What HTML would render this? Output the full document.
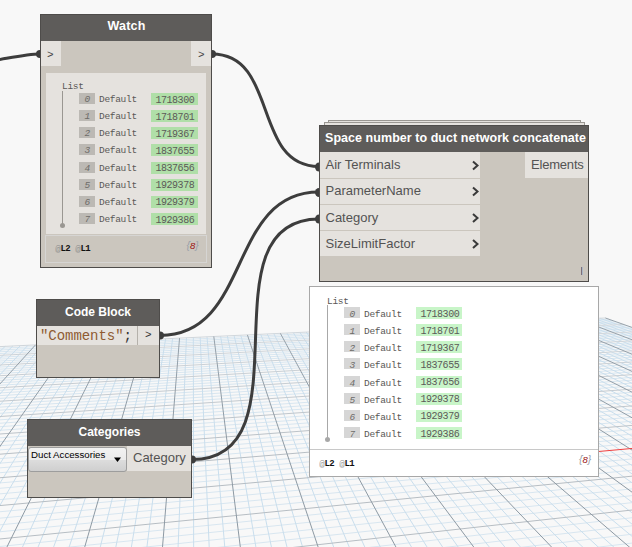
<!DOCTYPE html>
<html><head><meta charset="utf-8"><style>
*{margin:0;padding:0;box-sizing:border-box}
html,body{width:632px;height:547px;overflow:hidden;background:#f8f8f8;font-family:"Liberation Sans",sans-serif}
.a{position:absolute}
.mono{font-family:"Liberation Mono",monospace}
.node{position:absolute;background:#cbc6be;border:1px solid #4e4c4a}
.hdr{position:absolute;left:0;top:0;right:0;background:#5e5c5a;color:#fff;font-weight:bold;font-size:12px;white-space:nowrap}
.ib{position:absolute;height:11px;font-family:"Liberation Mono",monospace;font-style:italic;font-size:9.5px;line-height:14px;color:#6d6b68;text-align:right;padding-right:4.7px}
.df{position:absolute;font-size:9.5px;line-height:14px;letter-spacing:-0.3px;color:#5a5856}
.vb{position:absolute}
.vb span{position:absolute;left:4.4px;top:1.5px;font-family:"Liberation Mono",monospace;font-size:10px;line-height:11px;letter-spacing:-0.45px;color:#5c5a58}
.pt{position:absolute;font-size:13px;color:#535353;white-space:nowrap}
.chev{position:absolute}
.at{font-family:"Liberation Sans",sans-serif;color:#8a8a8a;font-size:7.5px;letter-spacing:-0.6px}
</style></head><body>
<svg width="632" height="547" style="position:absolute;left:0;top:0"><defs><linearGradient id="gS" gradientUnits="userSpaceOnUse" x1="0" y1="325" x2="0" y2="460"><stop offset="0" stop-color="#97a2ab"/><stop offset="1" stop-color="#8d99a3"/></linearGradient><linearGradient id="gH" gradientUnits="userSpaceOnUse" x1="0" y1="325" x2="0" y2="460"><stop offset="0" stop-color="#d3d9de"/><stop offset="1" stop-color="#b6bdc3"/></linearGradient></defs><path d="M-3392.30 6095.82L2653.46 1043.46M-4587.22 6095.91L2535.88 1001.81M-5782.14 6096.01L2429.02 963.96M-6977.06 6096.11L2331.48 929.41M-5090.39 4156.81L2159.89 868.63M-4104.49 3413.23L2084.02 841.76M-3428.68 2903.52L2013.79 816.88M-2936.53 2532.34L1948.59 793.78M-2267.74 2027.93L1831.26 752.22M-2030.19 1848.77L1778.28 733.46M-1834.46 1701.15L1728.63 715.87M-1670.41 1577.42L1681.99 699.35M-1410.85 1381.66L1596.73 669.15M-1306.42 1302.89L1557.65 655.30M-1214.76 1233.76L1520.70 642.21M-1133.66 1172.59L1485.69 629.81M-996.59 1069.22L1420.94 606.88M-938.16 1025.14L1390.93 596.25M-885.19 985.20L1362.36 586.13M-836.97 948.83L1335.12 576.48M-752.40 885.04L1284.28 558.47M-715.11 856.92L1260.52 550.05M-680.66 830.93L1237.77 542.00M-648.72 806.85L1215.97 534.27M-591.38 763.60L1174.99 519.76M-565.54 744.11L1155.71 512.93M-541.35 725.86L1137.17 506.36M-518.65 708.74L1119.33 500.04M-477.22 677.50L1085.61 488.10M-458.26 663.20L1069.65 482.44M-440.35 649.69L1054.25 476.99M-423.39 636.90L1039.38 471.72M-392.07 613.27L1011.14 461.72M-377.57 602.34L997.71 456.96M-363.77 591.93L984.71 452.36M-350.63 582.02L972.13 447.90M-326.11 563.53L948.14 439.40M-314.66 554.90L936.68 435.34M-303.71 546.64L925.57 431.41M-293.22 538.72L914.79 427.59M-273.52 523.86L894.14 420.28M-264.25 516.87L884.26 416.77M-255.35 510.16L874.65 413.37M-246.78 503.70L865.30 410.06M-230.60 491.49L847.36 403.70M-222.95 485.72L838.74 400.65M-215.56 480.15L830.35 397.68M-208.44 474.78L822.17 394.78M-194.91 464.58L806.43 389.20M-188.48 459.73L798.85 386.52M-182.26 455.04L791.46 383.90M-176.24 450.50L784.24 381.35M-164.77 441.84L770.32 376.41M-159.29 437.71L763.60 374.03M-153.98 433.71L757.04 371.71M-148.83 429.82L750.62 369.44M-138.97 422.39L738.22 365.04M-134.25 418.83L732.23 362.92M-129.66 415.37L726.36 360.84M-125.20 412.00L720.62 358.81M-116.64 405.55L709.51 354.87M-112.53 402.45L704.12 352.97M-108.53 399.43L698.85 351.10M-104.63 396.49L693.69 349.27M-97.13 390.83L683.67 345.72M-93.52 388.10L678.81 344.00M-89.99 385.45L674.04 342.31M-86.56 382.85L669.37 340.65M-79.93 377.85L660.29 337.44M-76.73 375.44L655.88 335.88M-73.60 373.09L651.55 334.34M-70.55 370.78L647.30 332.84M-64.65 366.33L639.04 329.91M-61.80 364.18L635.02 328.49M-59.01 362.08L631.07 327.09M-56.28 360.02L627.19 325.71M-50.99 356.03L619.64 323.04M-48.43 354.10L615.96 321.74M-45.93 352.21L612.34 320.45M-43.47 350.36L608.78 319.19" stroke="#d8e6f0" stroke-width="1" fill="none"/><path d="M-7416.02 6096.15L-33.27 348.18M-7170.28 6096.13L-25.50 347.81M-6924.55 6096.11L-17.77 347.44M-6678.81 6096.09L-10.07 347.08M-6187.34 6096.05L5.24 346.35M-5941.60 6096.03L12.85 345.99M-5695.86 6096.01L20.42 345.64M-5450.13 6095.99L27.97 345.28M-4958.65 6095.95L42.96 344.57M-4712.91 6095.93L50.42 344.22M-4467.18 6095.90L57.84 343.87M-4221.44 6095.88L65.23 343.52M-3729.97 6095.84L79.92 342.82M-3484.23 6095.82L87.23 342.47M-3238.49 6095.80L94.50 342.13M-2992.76 6095.78L101.74 341.79M-2501.28 6095.74L116.14 341.11M-2255.55 6095.72L123.30 340.77M-1897.86 5794.68L130.43 340.43M-1548.66 5443.69L137.53 340.09M-966.52 4858.59L151.65 339.43M-721.36 4612.18L158.66 339.09M-500.68 4390.38L165.65 338.76M-301.01 4189.69L172.61 338.43M46.30 3840.61L186.45 337.78M198.27 3687.87L193.33 337.45M338.09 3547.34L200.18 337.13M467.17 3417.61L207.01 336.81M697.67 3185.93L220.58 336.16M801.01 3082.06L227.32 335.84M897.47 2985.12L234.04 335.53M987.71 2894.42L240.74 335.21M1151.78 2729.51L254.05 334.58M1226.59 2654.32L260.66 334.27M1297.12 2583.43L267.26 333.95M1363.74 2516.48L273.82 333.64M1486.46 2393.13L286.88 333.03M1543.10 2336.20L293.37 332.72M1596.91 2282.12L299.84 332.41M1648.10 2230.67L306.28 332.11M1743.33 2134.95L319.09 331.50M1787.71 2090.35L325.46 331.20M1830.11 2047.73L331.81 330.90M1870.67 2006.96L338.13 330.60M1946.72 1930.53L350.70 330.01M1982.42 1894.65L356.95 329.71M2016.69 1860.20L363.18 329.41M2049.62 1827.11L369.38 329.12M2111.75 1764.66L381.72 328.54M2141.09 1735.17L387.86 328.25M2169.36 1706.75L393.97 327.96M2196.62 1679.35L400.06 327.67M2248.33 1627.38L412.18 327.10M2272.87 1602.72L418.20 326.81M2296.59 1578.87L424.20 326.53M2319.54 1555.81L430.18 326.24M2363.24 1511.89L442.07 325.68M2384.07 1490.95L447.99 325.40M2404.26 1470.66L453.88 325.12M2423.83 1450.98L459.75 324.84M2461.26 1413.37L471.43 324.29M2479.16 1395.38L477.24 324.02M2496.55 1377.90L483.03 323.74M2513.45 1360.92L488.80 323.47M2545.85 1328.34L500.27 322.93M2561.40 1312.72L505.97 322.66M2576.53 1297.51L511.66 322.39M2591.27 1282.70L517.32 322.12M2619.61 1254.22L528.59 321.59M2633.24 1240.52L534.19 321.32M2646.53 1227.16L539.78 321.06M2659.49 1214.13L545.34 320.79M2684.47 1189.02L556.42 320.27M2696.52 1176.91L561.92 320.01M2708.28 1165.09L567.41 319.75M2719.77 1153.54L572.88 319.49M2741.97 1131.23L583.76 318.98M2752.70 1120.45L589.17 318.72M2763.18 1109.91L594.56 318.46M2773.44 1099.60L599.93 318.21" stroke="#c9deed" stroke-width="1" fill="none"/><path d="M-2197.38 6095.72L2783.47 1089.52M-6663.28 5343.11L2242.10 897.75M-2562.13 2249.96L1887.89 772.28M-1530.92 1472.21L1638.10 683.80M-1061.39 1118.09L1452.48 618.05M-792.87 915.57L1309.12 567.27M-619.04 784.46L1195.06 526.87M-497.31 692.65L1102.16 493.96M-407.32 624.78L1025.02 466.63M-338.09 572.56L959.95 443.58M-283.17 531.14L414.69 468.11M-238.54 497.48L856.21 406.84M-201.56 469.59L814.20 391.96M-170.42 446.10L777.20 378.85M-143.83 426.05L744.35 367.22M-120.86 408.73L715.01 356.82M-100.83 393.62L688.63 347.48M-83.20 380.32L664.78 339.03M-67.57 368.53L643.13 331.36M-53.61 358.00L623.38 324.37M-41.07 348.55L605.29 317.96" stroke="url(#gH)" stroke-width="1" fill="none"/><path d="M-7661.76 6096.17L-41.07 348.55M-6433.07 6096.07L-2.40 346.72M-5204.39 6095.97L35.48 344.92M-3975.70 6095.86L72.59 343.17M-2747.02 6095.76L108.96 341.45M-1240.49 5133.95L144.60 339.76M-119.46 4007.23L179.54 338.11M586.68 3297.48L213.81 336.48M1072.31 2809.39L247.41 334.89M1426.75 2453.14L280.36 333.33M1696.85 2181.67L312.70 331.80M1909.50 1967.93L344.43 330.30M2081.28 1795.28L375.56 328.83M2222.93 1652.91L406.13 327.38M2341.74 1533.49L436.14 325.96M2442.83 1431.90L465.60 324.57M2529.87 1344.40L494.54 323.20M2605.62 1268.27L522.97 321.85M2672.13 1201.42L550.89 320.53M2731.00 1142.25L578.33 319.23M2783.47 1089.52L605.29 317.96" stroke="url(#gS)" stroke-width="1" fill="none"/><path d="M414.69 468.11L904.32 423.88" stroke="#ef4040" stroke-width="1" fill="none"/></svg>
<svg width="632" height="547" class="a" style="left:0;top:0">
<g stroke="#3d3d3d" stroke-width="3" fill="none">
<path d="M-30 62.3C-13.5 64.2 20 54 40 54"/>
<path d="M212 54C279 54 252 166.5 319 166.5"/>
<path d="M160 335.5C252 335.5 227 192 319 192"/>
<path d="M192 459.5C311 459.5 200 219 319 219"/>
</g>
</svg>

<!-- Watch node -->
<div class="node" style="left:40px;top:14px;width:172px;height:254px">
 <div class="hdr" style="height:26px;line-height:22px;text-align:center;font-size:12.5px;letter-spacing:0.2px;padding-left:1px">Watch</div>
</div>
<div class="a" style="left:41px;top:41px;width:20px;height:25px;background:#e5e2de"></div>
<div class="a" style="left:191px;top:41px;width:20px;height:25px;background:#e5e2de"></div>
<div class="a mono" style="left:47px;top:49px;font-size:11px;color:#444">&gt;</div>
<div class="a mono" style="left:198px;top:49px;font-size:11px;color:#444">&gt;</div>
<div class="a" style="left:46px;top:73px;width:160px;height:161px;background:#e5e2de"></div>
<div class="a mono" style="left:62px;top:80.5px;font-size:9.5px;line-height:11px;letter-spacing:-0.3px;color:#5a5856">List</div>
<div class="a" style="left:62px;top:91px;width:1px;height:135px;background:#9a9792"></div>
<div class="a" style="left:60px;top:223px;width:5px;height:5px;border-radius:50%;background:#9a9792"></div>
<div class="ib" style="left:79px;top:93.0px;width:16px;background:#bcb9b4"><span style="position:relative;top:0px">0</span></div><div class="mono df" style="left:99px;top:93.0px">Default</div><div class="vb" style="left:151px;top:93.0px;width:47px;height:12px;background:#b0dfa8"><span>1718300</span></div><div class="ib" style="left:79px;top:110.15px;width:16px;background:#bcb9b4"><span style="position:relative;top:0px">1</span></div><div class="mono df" style="left:99px;top:110.15px">Default</div><div class="vb" style="left:151px;top:110.15px;width:47px;height:12px;background:#b0dfa8"><span>1718701</span></div><div class="ib" style="left:79px;top:127.3px;width:16px;background:#bcb9b4"><span style="position:relative;top:0px">2</span></div><div class="mono df" style="left:99px;top:127.3px">Default</div><div class="vb" style="left:151px;top:127.3px;width:47px;height:12px;background:#b0dfa8"><span>1719367</span></div><div class="ib" style="left:79px;top:144.45px;width:16px;background:#bcb9b4"><span style="position:relative;top:0px">3</span></div><div class="mono df" style="left:99px;top:144.45px">Default</div><div class="vb" style="left:151px;top:144.45px;width:47px;height:12px;background:#b0dfa8"><span>1837655</span></div><div class="ib" style="left:79px;top:161.6px;width:16px;background:#bcb9b4"><span style="position:relative;top:0px">4</span></div><div class="mono df" style="left:99px;top:161.6px">Default</div><div class="vb" style="left:151px;top:161.6px;width:47px;height:12px;background:#b0dfa8"><span>1837656</span></div><div class="ib" style="left:79px;top:178.75px;width:16px;background:#bcb9b4"><span style="position:relative;top:0px">5</span></div><div class="mono df" style="left:99px;top:178.75px">Default</div><div class="vb" style="left:151px;top:178.75px;width:47px;height:12px;background:#b0dfa8"><span>1929378</span></div><div class="ib" style="left:79px;top:195.9px;width:16px;background:#bcb9b4"><span style="position:relative;top:0px">6</span></div><div class="mono df" style="left:99px;top:195.9px">Default</div><div class="vb" style="left:151px;top:195.9px;width:47px;height:12px;background:#b0dfa8"><span>1929379</span></div><div class="ib" style="left:79px;top:213.05px;width:16px;background:#bcb9b4"><span style="position:relative;top:0px">7</span></div><div class="mono df" style="left:99px;top:213.05px">Default</div><div class="vb" style="left:151px;top:213.05px;width:47px;height:12px;background:#b0dfa8"><span>1929386</span></div>
<div class="a" style="left:45px;top:235px;width:162px;height:28px;border:1px solid #d6d5d3"></div>
<div class="a" style="left:54.5px;top:243.5px;font-size:9px;line-height:10px;color:#8a8a8a;transform:scaleX(0.68);transform-origin:0 0">@</div><div class="a mono" style="left:60.5px;top:244px;font-size:9px;line-height:10px;font-weight:bold;color:#111;letter-spacing:-0.7px">L2</div><div class="a" style="left:74.5px;top:243.5px;font-size:9px;line-height:10px;color:#8a8a8a;transform:scaleX(0.68);transform-origin:0 0">@</div><div class="a mono" style="left:80.5px;top:244px;font-size:9px;line-height:10px;font-weight:bold;color:#111;letter-spacing:-0.7px">L1</div>
<div class="a" style="left:186.5px;top:238.5px;font-size:10.5px;line-height:12px;font-style:italic;color:#9a1010"><span style="color:#9aa0aa">{</span><span style="font-size:9.5px">8</span><span style="color:#9aa0aa">}</span></div>

<!-- Big node -->
<div class="a" style="left:328px;top:120px;width:253px;height:20px;background:#e5e2de;border:1px solid #9a9792"></div>
<div class="a" style="left:324px;top:122px;width:261px;height:20px;background:#e5e2de;border:1px solid #9a9792"></div>
<div class="node" style="left:319px;top:125px;width:270px;height:157px">
 <div class="hdr" style="height:26px;line-height:24px;padding-left:5px;font-size:12.5px;letter-spacing:0.05px">Space number to duct network concatenate</div>
</div>
<div class="a" style="left:320px;top:152px;width:160px;height:104px;background:#e5e2de"></div>
<div class="a" style="left:320px;top:178px;width:160px;height:1px;background:#cbc6be"></div>
<div class="a" style="left:320px;top:204px;width:160px;height:1px;background:#cbc6be"></div>
<div class="a" style="left:320px;top:230px;width:160px;height:1px;background:#cbc6be"></div>
<div class="pt" style="left:325.5px;top:157px">Air Terminals</div>
<div class="pt" style="left:325.5px;top:183px">ParameterName</div>
<div class="pt" style="left:325.5px;top:210px">Category</div>
<div class="pt" style="left:325.5px;top:236px">SizeLimitFactor</div>
<svg class="a" style="left:470px;top:152px" width="12" height="104"><g stroke="#3a3a3a" stroke-width="2" fill="none">
<path d="M3 9.5L7.5 13.5L3 17.5"/><path d="M3 35.5L7.5 39.5L3 43.5"/><path d="M3 62L7.5 66L3 70"/><path d="M3 88L7.5 92L3 96"/></g></svg>
<div class="a" style="left:525px;top:152px;width:63px;height:26px;background:#e5e2de"></div>
<div class="pt" style="left:531px;top:157px;letter-spacing:-0.2px">Elements</div>
<div class="a" style="left:581px;top:267px;width:1px;height:8px;background:#7d6f7a"></div><div class="a" style="left:582px;top:267px;width:1px;height:8px;background:#a9b7c6"></div>

<!-- bubble -->
<div class="a" style="left:309px;top:286px;width:290px;height:191px;background:#fff;border:1px solid #a8a8a8"></div>
<div class="a" style="left:310px;top:449px;width:288px;height:1px;background:#c8c8c8"></div>
<div class="a mono" style="left:327px;top:295.7px;font-size:9.5px;line-height:11px;letter-spacing:-0.3px;color:#5a5856">List</div>
<div class="a" style="left:327px;top:305px;width:1px;height:135px;background:#a8a8a8"></div>
<div class="a" style="left:325px;top:437px;width:5px;height:5px;border-radius:50%;background:#a8a8a8"></div>
<div class="ib" style="left:344px;top:307.0px;width:16px;background:#d6d6d6"><span style="position:relative;top:1px">0</span></div><div class="mono df" style="left:364px;top:308.0px">Default</div><div class="vb" style="left:416px;top:307.0px;width:46px;height:12px;background:#c8f5c8"><span>1718300</span></div><div class="ib" style="left:344px;top:324.15px;width:16px;background:#d6d6d6"><span style="position:relative;top:1px">1</span></div><div class="mono df" style="left:364px;top:325.15px">Default</div><div class="vb" style="left:416px;top:324.15px;width:46px;height:12px;background:#c8f5c8"><span>1718701</span></div><div class="ib" style="left:344px;top:341.3px;width:16px;background:#d6d6d6"><span style="position:relative;top:1px">2</span></div><div class="mono df" style="left:364px;top:342.3px">Default</div><div class="vb" style="left:416px;top:341.3px;width:46px;height:12px;background:#c8f5c8"><span>1719367</span></div><div class="ib" style="left:344px;top:358.45px;width:16px;background:#d6d6d6"><span style="position:relative;top:1px">3</span></div><div class="mono df" style="left:364px;top:359.45px">Default</div><div class="vb" style="left:416px;top:358.45px;width:46px;height:12px;background:#c8f5c8"><span>1837655</span></div><div class="ib" style="left:344px;top:375.6px;width:16px;background:#d6d6d6"><span style="position:relative;top:1px">4</span></div><div class="mono df" style="left:364px;top:376.6px">Default</div><div class="vb" style="left:416px;top:375.6px;width:46px;height:12px;background:#c8f5c8"><span>1837656</span></div><div class="ib" style="left:344px;top:392.75px;width:16px;background:#d6d6d6"><span style="position:relative;top:1px">5</span></div><div class="mono df" style="left:364px;top:393.75px">Default</div><div class="vb" style="left:416px;top:392.75px;width:46px;height:12px;background:#c8f5c8"><span>1929378</span></div><div class="ib" style="left:344px;top:409.9px;width:16px;background:#d6d6d6"><span style="position:relative;top:1px">6</span></div><div class="mono df" style="left:364px;top:410.9px">Default</div><div class="vb" style="left:416px;top:409.9px;width:46px;height:12px;background:#c8f5c8"><span>1929379</span></div><div class="ib" style="left:344px;top:427.05px;width:16px;background:#d6d6d6"><span style="position:relative;top:1px">7</span></div><div class="mono df" style="left:364px;top:428.05px">Default</div><div class="vb" style="left:416px;top:427.05px;width:46px;height:12px;background:#c8f5c8"><span>1929386</span></div>
<div class="a" style="left:318.5px;top:458.5px;font-size:9px;line-height:10px;color:#8a8a8a;transform:scaleX(0.68);transform-origin:0 0">@</div><div class="a mono" style="left:324.5px;top:459px;font-size:9px;line-height:10px;font-weight:bold;color:#111;letter-spacing:-0.7px">L2</div><div class="a" style="left:338.5px;top:458.5px;font-size:9px;line-height:10px;color:#8a8a8a;transform:scaleX(0.68);transform-origin:0 0">@</div><div class="a mono" style="left:344.5px;top:459px;font-size:9px;line-height:10px;font-weight:bold;color:#111;letter-spacing:-0.7px">L1</div>
<div class="a" style="left:579px;top:453px;font-size:10.5px;line-height:12px;font-style:italic;color:#9a1010"><span style="color:#9aa0aa">{</span><span style="font-size:9.5px">8</span><span style="color:#9aa0aa">}</span></div>

<!-- Code block -->
<div class="node" style="left:36px;top:299px;width:124px;height:79px">
 <div class="hdr" style="height:26px;line-height:24px;text-align:center">Code Block</div>
</div>
<div class="a" style="left:37px;top:326px;width:100px;height:19px;background:#e5e2de"></div>
<div class="a" style="left:137px;top:326px;width:1px;height:19px;background:#b5b1ab"></div>
<div class="a" style="left:138px;top:326px;width:21px;height:19px;background:#e5e2de"></div>
<div class="a mono" style="left:40px;top:328px;font-size:14px;letter-spacing:-0.05px;color:#8e5b32">"Comments"<span style="color:#333">;</span></div>
<div class="a mono" style="left:145px;top:329px;font-size:11px;color:#333">&gt;</div>

<!-- Categories -->
<div class="node" style="left:27px;top:419px;width:165px;height:79px">
 <div class="hdr" style="height:26px;line-height:25px;text-align:center">Categories</div>
</div>
<div class="a" style="left:28px;top:447px;width:99px;height:25px;border:1px solid #9d9d9d;border-radius:3px;background:linear-gradient(#f2f2f2,#ebebeb 50%,#dddddd 51%,#cfcfcf)"></div>
<div class="a" style="left:31px;top:449px;font-size:9.7px;color:#000">Duct Accessories</div>
<svg class="a" style="left:114px;top:457px" width="8" height="6"><path d="M0 0.5H7L3.5 5Z" fill="#000"/></svg>
<div class="a" style="left:127px;top:446px;width:64px;height:25px;background:#e5e2de"></div>
<div class="pt" style="left:133px;top:450px">Category</div>

<svg width="632" height="547" class="a" style="left:0;top:0">
<g fill="#3d3d3d">
<path d="M40 50A4 4 0 0 0 40 58Z"/>
<path d="M212 50A4 4 0 0 1 212 58Z"/>
<path d="M319 162.5A4 4.5 0 0 0 319 171.5Z"/>
<path d="M319 188A4 4.5 0 0 0 319 197Z"/>
<path d="M319 214.5A4 4.5 0 0 0 319 223.5Z"/>
<path d="M160 331.5A4 4 0 0 1 160 339.5Z"/>
<path d="M192 455.5A4 4 0 0 1 192 463.5Z"/>
</g></svg>
</body></html>
